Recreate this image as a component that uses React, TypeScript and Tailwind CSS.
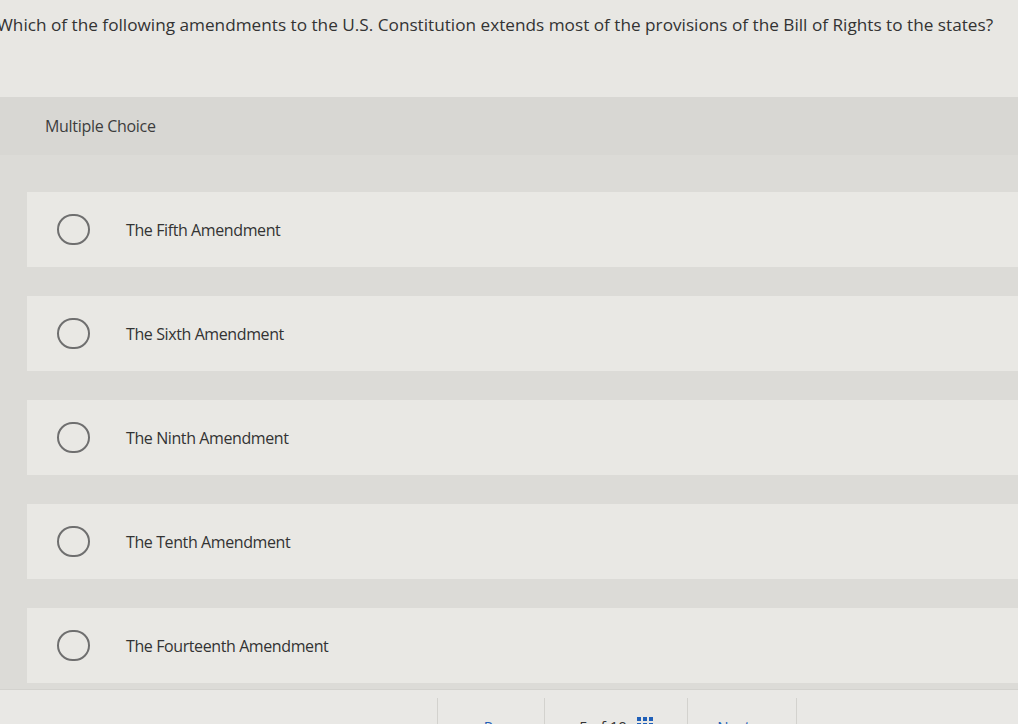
import React from "react";

const options = [
  "The Fifth Amendment",
  "The Sixth Amendment",
  "The Ninth Amendment",
  "The Tenth Amendment",
  "The Fourteenth Amendment",
];

function Radio() {
  return <span className="block w-[33px] h-[31px] rounded-full border-2 border-[#6f6f6f] bg-transparent shrink-0" />;
}

const App: React.FC = () => {
  return (
    <div className="w-[1018px] h-[724px] overflow-hidden bg-[#e6e5e1] text-[#333] flex flex-col" style={{ fontFamily: "'Open Sans', Lato, sans-serif" }}>
      <div className="h-[97px] shrink-0 bg-[#e8e7e3] pt-[12px] -ml-[3px]">
        <p className="text-[17.2px] leading-[26px] whitespace-nowrap">
          Which of the following amendments to the U.S. Constitution extends most of the provisions of the Bill of Rights to the states?
        </p>
      </div>

      <div className="h-[58px] shrink-0 bg-[#d8d7d3] pl-[45px] flex items-center">
        <span className="text-[16px] tracking-[-0.3px] text-[#3d3d3d]">Multiple Choice</span>
      </div>

      <div className="flex flex-col bg-[#dcdbd7] pt-[37px] gap-[29px]">
        {options.map((o) => (
          <div key={o} className="ml-[27px] h-[75px] bg-[#e9e8e4] flex items-center pl-[30px] gap-[36px]">
            <Radio />
            <span className="text-[16px] tracking-[-0.4px] text-[#333]">{o}</span>
          </div>
        ))}
      </div>

      <div className="h-[6px] shrink-0 bg-[#dcdbd7]" />
      <div className="flex-1 bg-[#e9e8e5] border-t border-[#d3d2ce]">
        <div className="ml-[437px] mt-[8px] flex text-[#1f5fb8] text-[15px]">
          <div className="w-[108px] h-[40px] border-x border-[#d3d2ce] flex items-start justify-center pt-[17px] gap-[12px]">
            <span>‹</span>
            <span>Prev</span>
          </div>
          <div className="w-[142px] h-[40px] flex items-start justify-center pt-[17px] gap-[10px]">
            <span className="text-[#333]">5 of 10</span>
            <span className="grid grid-cols-3 gap-[2px] mt-[2px]">
              {Array.from({ length: 9 }).map((_, i) => (
                <span key={i} className="w-[4px] h-[4px] bg-[#1f5fb8]" />
              ))}
            </span>
          </div>
          <div className="w-[110px] h-[40px] border-x border-[#d3d2ce] flex items-start justify-center pt-[17px] gap-[12px]">
            <span>Next</span>
            <span>›</span>
          </div>
        </div>
      </div>
    </div>
  );
};

export default App;
